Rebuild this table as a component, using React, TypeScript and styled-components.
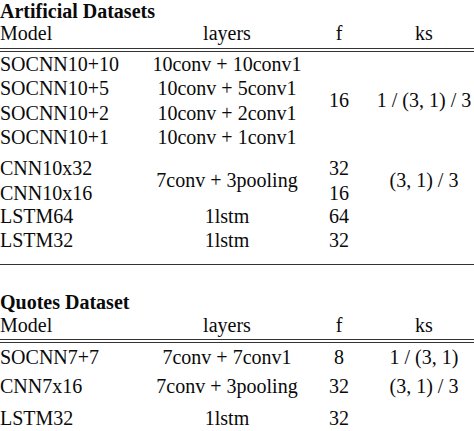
import React from 'react'
import styled, { createGlobalStyle } from 'styled-components'

const GlobalStyle = createGlobalStyle`
  html, body {
    margin: 0;
    padding: 0;
    background: #ffffff;
  }

  body {
    font-family: "Liberation Serif", "Times New Roman", serif;
    font-size: 20px;
    color: #0a0a0a;
    overflow: hidden;
  }
`

const COLUMNS = '150px 154px 70px 100px'

const Page = styled.div`
  width: 474px;
  display: flex;
  flex-direction: column;
`

const Section = styled.section<{ $gap?: number }>`
  display: flex;
  flex-direction: column;
  margin-top: ${props => props.$gap || 0}px;
`

const Title = styled.div`
  font-weight: bold;
  line-height: 22px;
  white-space: nowrap;
`

const HeaderRow = styled.div<{ $gap: number }>`
  display: grid;
  grid-template-columns: ${COLUMNS};
  margin-top: ${props => props.$gap}px;
  line-height: 22px;
`

const Group = styled.div<{ $gap?: number }>`
  display: grid;
  grid-template-columns: ${COLUMNS};
  margin-top: ${props => props.$gap || 0}px;
`

const Col = styled.div<{ $align?: 'left' | 'center' }>`
  display: flex;
  flex-direction: column;
  justify-content: center;
  text-align: ${props => props.$align || 'center'};
  white-space: nowrap;
`

const Line = styled.div<{ $h: number }>`
  line-height: ${props => props.$h}px;
  height: ${props => props.$h}px;
`

const DoubleRule = styled.div<{ $gap: number }>`
  margin-top: ${props => props.$gap}px;
  height: 2px;
  border-top: 1px solid #333333;
  border-bottom: 1px solid #333333;
`

const Rule = styled.div<{ $gap: number }>`
  margin-top: ${props => props.$gap}px;
  height: 0;
  border-top: 1px solid #333333;
`

type Cell = string[] | string | null

interface GroupSpec {
  gap?: number
  heights: number[]
  cells: [Cell, Cell, Cell, Cell]
}

const renderCol = (cell: Cell, heights: number[], align: 'left' | 'center', key: number) => {
  if (Array.isArray(cell)) {
    return (
      <Col $align={align} key={key}>
        {cell.map((text, i) => <Line $h={heights[i]} key={i}>{text}</Line>)}
      </Col>
    )
  }
  // one cell spanning every row of the group
  const total = heights.reduce((a, b) => a + b, 0)
  return (
    <Col $align={align} key={key} style={{ height: total }}>
      {cell && <Line $h={24.5}>{cell}</Line>}
    </Col>
  )
}

const DataGroup: React.FC<{ spec: GroupSpec }> = ({ spec }) => (
  <Group $gap={spec.gap}>
    {spec.cells.map((cell, i) => renderCol(cell, spec.heights, i === 0 ? 'left' : 'center', i))}
  </Group>
)

const Header: React.FC<{ gap: number }> = ({ gap }) => (
  <HeaderRow $gap={gap}>
    <Col $align="left">Model</Col>
    <Col>layers</Col>
    <Col>f</Col>
    <Col>ks</Col>
  </HeaderRow>
)

const artificialGroups: GroupSpec[] = [
  {
    heights: [24.5, 24.5, 24.5, 24.5],
    cells: [
      ['SOCNN10+10', 'SOCNN10+5', 'SOCNN10+2', 'SOCNN10+1'],
      ['10conv + 10conv1', '10conv + 5conv1', '10conv + 2conv1', '10conv + 1conv1'],
      '16',
      '1 / (3, 1) / 3'
    ]
  },
  {
    gap: 6.5,
    heights: [24.5, 24.5],
    cells: [
      ['CNN10x32', 'CNN10x16'],
      '7conv + 3pooling',
      ['32', '16'],
      '(3, 1) / 3'
    ]
  },
  {
    heights: [23.5, 23.5],
    cells: [
      ['LSTM64', 'LSTM32'],
      ['1lstm', '1lstm'],
      ['64', '32'],
      null
    ]
  }
]

const quotesGroups: GroupSpec[] = [
  { heights: [28], cells: [['SOCNN7+7'], ['7conv + 7conv1'], ['8'], ['1 / (3, 1)']] },
  { heights: [31], cells: [['CNN7x16'], ['7conv + 3pooling'], ['32'], ['(3, 1) / 3']] },
  { heights: [32], cells: [['LSTM32'], ['1lstm'], ['32'], ['']] }
]

const App: React.FC = () => (
  <>
    <GlobalStyle />
    <Page>
      <Section>
        <Title>Artificial Datasets</Title>
        <Header gap={0} />
        <DoubleRule $gap={3.5} />
        {artificialGroups.map((spec, i) => <DataGroup spec={spec} key={i} />)}
        <Rule $gap={11.5} />
      </Section>
      <Section $gap={26}>
        <Title>Quotes Dataset</Title>
        <Header gap={1} />
        <DoubleRule $gap={3.5} />
        {quotesGroups.map((spec, i) => <DataGroup spec={spec} key={i} />)}
      </Section>
    </Page>
  </>
)

export default App
